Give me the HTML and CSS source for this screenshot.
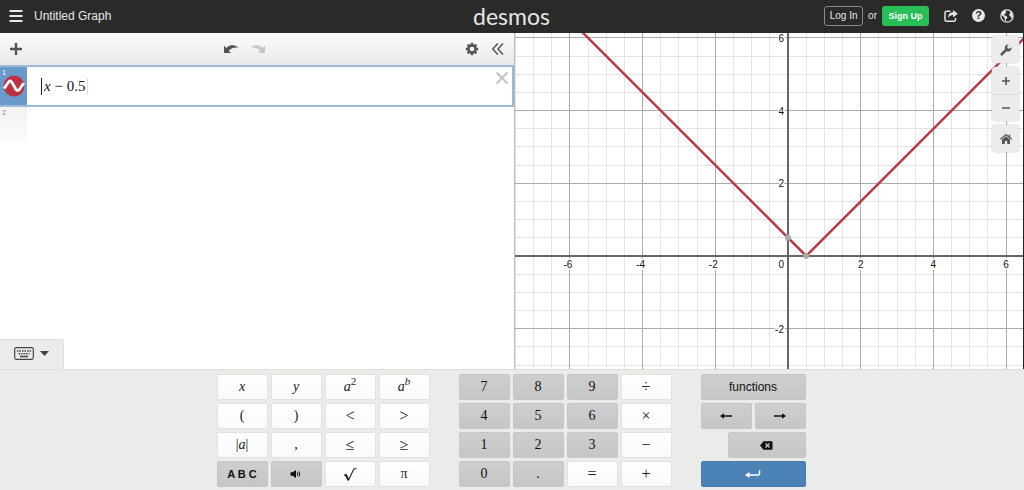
FILE: index.html
```html
<!DOCTYPE html>
<html lang="en">
<head>
<meta charset="utf-8">
<title>Untitled Graph</title>
<link rel="stylesheet" href="styles.css">
</head>
<body>
<header class="topbar">
  <div class="topbar-left">
    <button class="plain" aria-label="Menu"><svg width="14" height="12" viewBox="0 0 14 12"><path d="M0.500 1h13M0.500 6h13M0.500 11h13" stroke="#e8e8e8" stroke-width="2"/></svg></button>
    <h1 class="title">Untitled Graph</h1>
  </div>
  <a class="brand" href="#">desmos</a>
  <div class="topbar-right">
    <button class="login">Log In</button>
    <span class="or">or</span>
    <button class="signup">Sign Up</button>
    <button class="plain share" aria-label="Share"><svg width="14" height="14" viewBox="0 0 14 14"><path d="M6.500 2.200H2.500Q1 2.200 1 3.700v7Q1 12.200 2.500 12.200h7.500q1.500 0 1.500-1.500V9" fill="none" stroke="#e4e4e4" stroke-width="1.500"/><path d="M9 1 13.800 4.700 9 8.500V6Q5.800 5.800 4.200 9 3.800 3.500 9 3.300z" fill="#e4e4e4"/></svg></button>
    <button class="plain help" aria-label="Help"><span class="help-dot">?</span></button>
    <button class="plain" aria-label="Language"><svg width="14" height="14" viewBox="0 0 14 14"><circle cx="7" cy="7" r="6.200" fill="none" stroke="#e4e4e4" stroke-width="1.200"/><path d="M1 4.500 3.500 1.500 6.500 1.200 5.600 2.800 6.400 3.800 4.600 5 4 6.200 6 6.800 7.600 8.400 6.200 10 5.800 12.300 4.900 11.400 4.500 8.800 3 7.200 1.500 6.200zM9.500 2l2 1.100 1.200 2.700-.2 2.200-1.200 1.400-.8-2-1.300-.9.200-1.500L10.400 3.800z" fill="#e4e4e4"/></svg></button>
  </div>
</header>

<main class="workspace">
  <section class="panel" aria-label="Expressions">
    <div class="toolbar">
      <button class="plain" aria-label="Add item"><svg width="12" height="12" viewBox="0 0 12 12"><path d="M6 0v12M0 6h12" stroke="#555" stroke-width="2.400"/></svg></button>
      <div class="history">
        <button class="plain" aria-label="Undo"><svg width="16" height="10" viewBox="0 0 16 10"><path d="M1 1.500v7.500h7L5.800 6.800Q9.500 2.800 15.500 3.600 9-1.800 3.200 4z" fill="#555"/></svg></button>
        <button class="plain" aria-label="Redo"><svg width="16" height="10" viewBox="0 0 16 10"><path d="M15 1.500v7.500H8l2.200-2.200Q6.500 2.800.5 3.600 7-1.800 12.800 4z" fill="#c6c6c6"/></svg></button>
      </div>
      <div class="tools">
        <button class="plain" aria-label="Edit list"><svg width="14" height="14" viewBox="0 0 14 14"><circle cx="7" cy="7" r="3.600" fill="none" stroke="#555" stroke-width="2.600"/><path d="M7 .8v2M7 11.200v2M.8 7h2M11.200 7h2M2.600 2.600 4 4M10 10l1.400 1.400M11.400 2.600 10 4M4 10l-1.400 1.400" stroke="#555" stroke-width="2.400"/></svg></button>
        <button class="plain" aria-label="Hide list"><svg width="12" height="12" viewBox="0 0 12 12"><path d="M5.800.5.800 6l5 5.500M11 .5 6 6l5 5.500" fill="none" stroke="#555" stroke-width="1.500"/></svg></button>
      </div>
    </div>
    <div class="row active">
      <div class="row-tab">
        <span class="row-number">1</span>
        <button class="plain" aria-label="Hide curve"><svg width="22" height="22" viewBox="0 0 22 22"><circle cx="11" cy="11" r="10.500" fill="#bd3240"/><path d="M1.200 13.500L5.500 7Q7.300 4.500 9 7.500L12.800 14.200Q14.500 17 16.500 14.200L20.800 8" fill="none" stroke="#fff" stroke-width="2.800"/></svg></button>
      </div>
      <div class="math-field" role="textbox" aria-label="Expression 1" contenteditable="true" spellcheck="false"><span class="bar"></span><i>x</i> − 0.5<span class="bar ghost"></span></div>
      <button class="plain delete" aria-label="Delete expression"><svg width="12" height="12" viewBox="0 0 12 12"><path d="M.5.500l11 11M11.500.500l-11 11" stroke="#c6c6c6" stroke-width="2.200"/></svg></button>
    </div>
    <div class="row">
      <div class="row-tab"><span class="row-number">2</span></div>
    </div>
    <button class="keyboard-tab" aria-label="Toggle keypad">
      <svg width="20" height="13" viewBox="0 0 20 13"><rect x=".7" y=".7" width="18.600" height="11.600" rx="1.500" fill="none" stroke="#444" stroke-width="1.200"/><path d="M3 4h14M4.500 6.700h11" stroke="#444" stroke-width="1.500" stroke-dasharray="1.500 1"/><path d="M6 9.500h8" stroke="#444" stroke-width="1.500"/></svg>
      <svg width="9" height="5" viewBox="0 0 9 5"><path d="M0 0h9L4.500 5z" fill="#444"/></svg>
    </button>
  </section>

  <section class="graph" aria-label="Graph">
    <svg class="plot" id="plot" role="img" aria-label="Graph of the absolute value of x minus 0.5"></svg>
    <div class="graph-tools">
      <button class="tool" aria-label="Graph settings"><svg width="12" height="12" viewBox="0 0 12 12"><path d="M1.700 10.300 6.500 5.500" stroke="#555" stroke-width="2.600" stroke-linecap="round"/><path d="M11.600 3.200A3.500 3.500 0 1 1 8.700.5L7.200 2.300l.4 2 2 .4z" fill="#555"/></svg></button>
      <div class="zoom">
        <button class="tool" aria-label="Zoom in"><svg width="8" height="8" viewBox="0 0 8 8"><path d="M4 0v8M0 4h8" stroke="#555" stroke-width="1.600"/></svg></button>
        <button class="tool" aria-label="Zoom out"><svg width="8" height="8" viewBox="0 0 8 8"><path d="M0 4h8" stroke="#555" stroke-width="1.600"/></svg></button>
      </div>
      <button class="tool" aria-label="Default viewport"><svg width="12" height="10" viewBox="0 0 12 10"><path d="M.3 5.300 6 .6l5.700 4.700" fill="none" stroke="#555" stroke-width="1.300"/><path d="M8.700.8h1.600v3L8.700 2.400zM2 5.500l4-3.300 4 3.300V10H7.200V7H4.800v3H2z" fill="#555"/></svg></button>
    </div>
  </section>
</main>

<section class="keypad" aria-label="Keypad">
  <div class="keys four">
    <button class="key"><i>x</i></button><button class="key"><i>y</i></button><button class="key"><span><i>a</i><sup>2</sup></span></button><button class="key"><span><i>a</i><sup><i>b</i></sup></span></button>
    <button class="key">(</button><button class="key">)</button><button class="key sign">&lt;</button><button class="key sign">&gt;</button>
    <button class="key">|<i>a</i>|</button><button class="key">,</button><button class="key sign">≤</button><button class="key sign">≥</button>
    <button class="key gray sans abc">A B C</button>
    <button class="key gray" aria-label="Audio trace"><svg width="12" height="8" viewBox="0 0 12 8"><path d="M.5 2.300h2L6 0v8L2.500 5.700h-2z" fill="#111"/><path d="M7.300 2.500q1 1.500 0 3M8.800 1.300q2 2.700 0 5.400" fill="none" stroke="#111"/></svg></button>
    <button class="key" aria-label="Square root"><svg width="14" height="13" viewBox="0 0 14 13"><path d="M1 7.500 3 6.500 5.500 12 11 .8h2.500" fill="none" stroke="#222" stroke-width="1.100"/><path d="M2.700 6.700 5.500 12" stroke="#222" stroke-width="2"/></svg></button>
    <button class="key">π</button>
  </div>
  <div class="keys four">
    <button class="key gray">7</button><button class="key gray">8</button><button class="key gray">9</button><button class="key sign">÷</button>
    <button class="key gray">4</button><button class="key gray">5</button><button class="key gray">6</button><button class="key sign">×</button>
    <button class="key gray">1</button><button class="key gray">2</button><button class="key gray">3</button><button class="key sign">−</button>
    <button class="key gray">0</button><button class="key gray">.</button><button class="key sign">=</button><button class="key sign">+</button>
  </div>
  <div class="keys two">
    <button class="key gray sans wide">functions</button>
    <button class="key gray" aria-label="Left"><svg width="12" height="6" viewBox="0 0 12 6"><path d="M2 3h10" stroke="#111" stroke-width="1.500"/><path d="M0 3 4 .3v5.400z" fill="#111"/></svg></button>
    <button class="key gray" aria-label="Right"><svg width="12" height="6" viewBox="0 0 12 6"><path d="M0 3h10" stroke="#111" stroke-width="1.500"/><path d="M12 3 8 .3v5.400z" fill="#111"/></svg></button>
    <button class="key gray wide backspace" aria-label="Backspace"><svg width="13" height="9" viewBox="0 0 13 9"><path d="M0 4.500 3.500.3H11.500q1 0 1 1v6.400q0 1-1 1h-8z" fill="#111"/><path d="M5.500 2.500l4 4M9.500 2.500l-4 4" stroke="#ccc" stroke-width="1.300"/></svg></button>
    <button class="key enter wide" aria-label="Enter"><svg width="16" height="8" viewBox="0 0 16 8"><path d="M2 5h11q1.500 0 1.500-1.500V.3" fill="none" stroke="#fff" stroke-width="1.500"/><path d="M0 5 4.500 2v6z" fill="#fff"/></svg></button>
  </div>
</section>
<script src="graph.js"></script>
</body>
</html>
```
FILE: styles.css
```css
* { box-sizing: border-box; }
html, body { height: 100%; margin: 0; }
body {
  display: grid;
  grid-template-rows: 33px minmax(0, 1fr) auto;
  background: #fff;
  color: #222;
  font-family: "Liberation Sans", Arial, sans-serif;
  font-size: 12px;
}
button { font: inherit; color: inherit; cursor: pointer; }
svg { display: block; }
.plain { border: 0; padding: 0; background: none; }

.topbar {
  display: grid;
  grid-template-columns: 1fr auto 1fr;
  align-items: center;
  padding: 0 10px 2px 9px;
  background: #2a2a29;
  color: #e6e6e6;
}
.topbar-left, .topbar-right { display: flex; align-items: center; }
.topbar-left { gap: 11px; }
.title { margin: 0; font-size: 12px; font-weight: 400; }
.brand {
  color: #e6e6e6;
  font-family: Lato, sans-serif;
  font-size: 23px;
  line-height: 26px;
  text-decoration: none;
}
.topbar-right { justify-content: flex-end; }
.login, .signup {
  height: 20px;
  padding: 0;
  border-radius: 3px;
  font-size: 10px;
}
.login { width: 39px; border: 1px solid #8a8a8a; background: none; }
.or { margin: 0 5px; font-size: 10px; }
.signup { width: 47px; border: 0; background: #27bf55; color: #fff; font-weight: 700; font-size: 9px; }
.share { margin: 0 14px 0 15px; }
.help { margin-right: 15px; }
.help-dot {
  display: block;
  width: 13px;
  height: 13px;
  border-radius: 50%;
  background: #e8e8e8;
  color: #2a2a29;
  font-size: 11px;
  font-weight: 700;
  line-height: 13px;
}

.workspace { display: grid; grid-template-columns: 514fr 510fr; min-height: 0; }
.panel { display: flex; flex-direction: column; min-width: 0; }
.toolbar {
  display: grid;
  grid-template-columns: 1fr auto 1fr;
  align-items: center;
  height: 32px;
  padding: 0 10px;
  background: linear-gradient(#fcfcfc, #e9e9e9);
}
.history { display: flex; gap: 11px; margin-right: 26px; }
.tools { display: flex; align-items: center; justify-content: flex-end; gap: 13px; }

.row { display: flex; height: 35px; }
.row-tab {
  position: relative;
  display: flex;
  align-items: center;
  justify-content: center;
  width: 27px;
  background: linear-gradient(#f2f2f2, #fbfbfb);
  color: #888;
}
.row-number { position: absolute; top: 1px; left: 2px; font-size: 7px; line-height: 10px; }
.row.active { height: 42px; border: 2px solid #9db9d6; border-left: 0; }
.active .row-tab { background: #689bcc; color: #fff; }
.math-field {
  display: flex;
  flex: 1;
  align-items: center;
  padding-left: 14px;
  outline: 0;
  white-space: pre;
  color: #111;
  font-family: "Liberation Serif", "Times New Roman", serif;
  font-size: 15px;
}
.bar { width: 1px; height: 17px; margin-right: 2px; background: #222; }
.ghost { margin: 0 0 0 2px; background: #ddd; }
.delete { align-self: flex-start; padding: 5px 4px 0 0; }

.keyboard-tab {
  display: flex;
  align-items: center;
  gap: 6px;
  width: 64px;
  height: 30px;
  margin-top: auto;
  padding: 0 0 2px 14px;
  border: 1px solid #e0e0e0;
  border-width: 1px 1px 0 0;
  border-top-right-radius: 3px;
  background: #ebebea;
}

.graph {
  position: relative;
  min-width: 0;
  overflow: hidden;
  border-left: 1px solid #bbb;
  border-right: 1px solid #222;
}
.plot { width: 100%; height: 100%; }
.plot text { fill: #111; stroke: #fff; stroke-width: 3px; paint-order: stroke; font-size: 10px; }
.graph-tools {
  position: absolute;
  top: 3px;
  right: 4px;
  display: grid;
  gap: 4px;
  width: 27px;
}
.tool {
  display: flex;
  align-items: center;
  justify-content: center;
  width: 100%;
  height: 27px;
  padding: 0;
  border: 0;
  border-radius: 4px;
  background: #ececec;
}
.graph-tools > * { border-radius: 4px; box-shadow: 0 0 2px #bbb; }
.zoom { overflow: hidden; background: #ececec; }
.zoom .tool + .tool { border-top: 1px solid #ddd; border-radius: 0; }

.keypad {
  display: flex;
  justify-content: center;
  gap: 29px;
  padding: 4px 2px 3px 0;
  border-top: 1px solid #dedede;
  background: #ebebea;
}
.keys { display: grid; grid-auto-rows: 26px; gap: 3px; }
.four { grid-template-columns: repeat(4, 51px); }
.two { grid-template-columns: repeat(2, 51px); }
.key {
  display: flex;
  align-items: center;
  justify-content: center;
  padding: 0;
  border: 1px solid #e2e2e2;
  border-radius: 2px;
  background: linear-gradient(#fff, #fafafa);
  color: #222;
  font-family: "Liberation Serif", "Times New Roman", serif;
  font-size: 14px;
  line-height: 16px;
}
.key sup { font-size: 11px; line-height: 0; }
.sign { font-size: 16px; }
.gray { border-color: #c6c6c6; background: linear-gradient(#cecece, #c6c6c6); color: #111; }
.sans { font-family: "Liberation Sans", Arial, sans-serif; font-size: 12px; }
.abc { font-size: 11px; font-weight: 700; }
.wide { grid-column: span 2; }
.backspace { margin-left: 27px; }
.enter { border-color: #477eb0; background: #4c83b6; }
```
FILE: graph.js
```js
const plot = document.getElementById('plot');

function add(name, attrs, text) {
  const node = document.createElementNS('http://www.w3.org/2000/svg', name);
  for (const key in attrs) node.setAttribute(key, attrs[key]);
  if (text !== undefined) node.textContent = text;
  plot.appendChild(node);
}

function draw() {
  plot.replaceChildren();
  const box = plot.getBoundingClientRect();
  const w = box.width, h = box.height;
  const unit = w / 13.98;
  const ox = Math.round(w * 0.537), oy = Math.round(h * 0.664);
  const px = x => ox + x * unit;
  const py = y => oy - y * unit;

  // Half-unit grid first, then the two-unit grid, then the axes.
  const line = (x1, y1, x2, y2, stroke, width) =>
    add('line', { x1, y1, x2, y2, stroke, 'stroke-width': width });
  for (const major of [false, true]) {
    const color = major ? '#ababab' : '#e4e4e4';
    for (let i = -40; i <= 40; i++) {
      if ((i % 4 === 0) !== major) continue;
      const x = Math.floor(px(i / 2)) + 0.5, y = Math.floor(py(i / 2)) + 0.5;
      line(x, 0, x, h, color, 1);
      line(0, y, w, y, color, 1);
    }
  }
  line(ox, 0, ox, h, '#666', 2);
  line(0, oy, w, oy, '#666', 2);

  add('path', {
    d: `M${px(-9.5)} ${py(10)}L${px(0.5)} ${oy}L${px(10.5)} ${py(10)}`,
    fill: 'none', stroke: '#b83a42', 'stroke-width': 2.5
  });
  add('circle', { cx: ox, cy: py(0.5), r: 3, fill: '#aaa' });
  add('circle', { cx: px(0.5), cy: oy, r: 3, fill: '#aaa' });

  for (let n = -6; n <= 6; n += 2) {
    if (n === 0) continue;
    add('text', { x: px(n) - (n < 0 ? 2 : 0), y: oy + 12, 'text-anchor': 'middle' }, n);
    if (py(n) < h) add('text', { x: ox - 4, y: py(n) + 4, 'text-anchor': 'end' }, n);
  }
  add('text', { x: ox - 4, y: oy + 12, 'text-anchor': 'end' }, 0);
}

draw();
window.addEventListener('resize', draw);
```
